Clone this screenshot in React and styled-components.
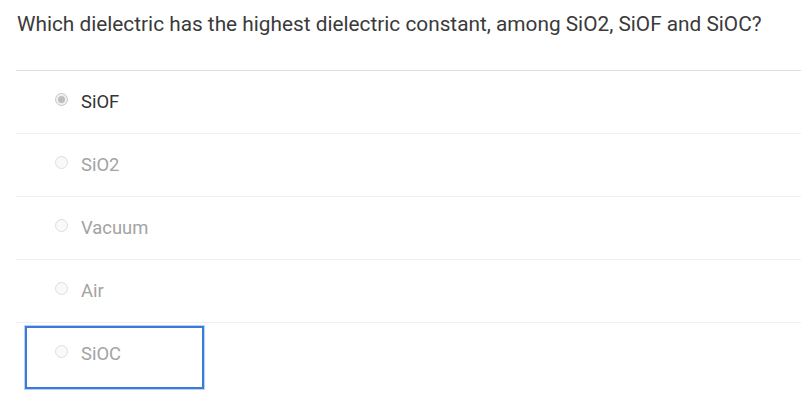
import styled, { createGlobalStyle } from 'styled-components'

const GlobalStyle = createGlobalStyle`
  body {
    margin: 0;
    background: #fff;
    font-family: Roboto, "Liberation Sans", Arial, sans-serif;
  }
`

const Wrapper = styled.div`
  width: 785px;
  margin-left: 16px;
  padding-bottom: 12px;
`

const Question = styled.div`
  font-size: 20.8px;
  line-height: 26px;
  color: #3a3a3a;
  padding: 11px 0 0 1px;
  height: 59px;
  border-bottom: 1px solid #dcdcdc;
`

const OptionList = styled.div`
  display: flex;
  flex-direction: column;
`

const OptionRow = styled.div`
  height: ${(props) => (props.last ? '63px' : '59px')};
  padding: 3px 0 0 9px;
  border-bottom: ${(props) => (props.last ? 'none' : '1px solid #f0f0f0')};
`

const Label = styled.label`
  box-sizing: border-box;
  display: flex;
  align-items: flex-start;
  gap: 13px;
  width: 179px;
  height: 63px;
  padding: 17px 0 0 28px;
  border: 2px solid ${(props) => (props.focused ? '#3b7bd8' : 'transparent')};
  box-shadow: ${(props) =>
    props.focused ? '0 0 0 1px rgba(59, 123, 216, 0.35)' : 'none'};
  cursor: pointer;
`

const Radio = styled.span`
  box-sizing: border-box;
  flex: none;
  width: 13px;
  height: 13px;
  border-radius: 50%;
  border: 1px solid ${(props) => (props.checked ? '#c8c8c8' : '#dedede')};
  background: ${(props) => (props.checked ? '#f0f0f0' : '#f9f9f9')};
  display: flex;
  align-items: center;
  justify-content: center;

  &::after {
    content: '';
    display: ${(props) => (props.checked ? 'block' : 'none')};
    width: 7px;
    height: 7px;
    border-radius: 50%;
    background: #bdbdbd;
  }
`

const OptionText = styled.span`
  font-size: 18.4px;
  line-height: 22px;
  margin-top: -2px;
  color: ${(props) => (props.active ? '#333' : '#a3a3a3')};
`

const options = ['SiOF', 'SiO2', 'Vacuum', 'Air', 'SiOC']

export default function App() {
  return (
    <>
      <GlobalStyle />
      <Wrapper>
        <Question>
          Which dielectric has the highest dielectric constant, among SiO2, SiOF and SiOC?
        </Question>
        <OptionList>
          {options.map((opt, i) => (
            <OptionRow key={opt} last={i === options.length - 1}>
              <Label focused={i === options.length - 1}>
                <Radio checked={i === 0} />
                <OptionText active={i === 0}>{opt}</OptionText>
              </Label>
            </OptionRow>
          ))}
        </OptionList>
      </Wrapper>
    </>
  )
}
